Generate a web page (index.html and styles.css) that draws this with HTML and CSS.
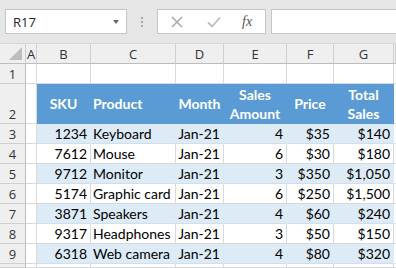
FILE: index.html
```html
<!DOCTYPE html>
<html>
<head>
<meta charset="utf-8">
<link rel="stylesheet" href="styles.css">
</head>
<body>
<div class="app">
  <div class="toolbar">
    <div class="namebox"><span class="nb-text">R17</span><span class="nb-arrow"></span></div>
    <div class="grip"><i></i><i></i><i></i></div>
    <div class="fbtns">
      <svg class="ico" width="12" height="12" viewBox="0 0 12 12"><path d="M1 1L11 11M11 1L1 11" stroke="#ababab" stroke-width="1.6" fill="none"/></svg>
      <svg class="ico" width="14" height="12" viewBox="0 0 14 12"><path d="M1 6.5L5 10.5L13 1.5" stroke="#bdbdbd" stroke-width="1.8" fill="none"/></svg>
      <span class="fx">fx</span>
    </div>
    <div class="finput"></div>
  </div>
  <div class="sheet">
    <div class="hd corner"><svg width="13" height="13" viewBox="0 0 13 13"><polygon points="13,0 13,13 0,13" fill="#bdbdbd"/></svg></div>
    <div class="hd ch">A</div><div class="hd ch">B</div><div class="hd ch">C</div><div class="hd ch">D</div><div class="hd ch">E</div><div class="hd ch">F</div><div class="hd ch">G</div><div class="hd ch"></div>

    <div class="hd rh">1</div>
    <div class="c"></div><div class="c"></div><div class="c"></div><div class="c"></div><div class="c"></div><div class="c"></div><div class="c"></div><div class="c"></div>

    <div class="hd rh">2</div>
    <div class="c"></div>
    <div class="c th cen">SKU</div>
    <div class="c th">Product</div>
    <div class="c th cen">Month</div>
    <div class="c th cen">Sales<br>Amount</div>
    <div class="c th cen">Price</div>
    <div class="c th cen">Total<br>Sales</div>
    <div class="c"></div>

    <div class="hd rh">3</div>
    <div class="c"></div><div class="c band r">1234</div><div class="c band">Keyboard</div><div class="c band r">Jan-21</div><div class="c band r">4</div><div class="c band r">$35</div><div class="c band r">$140</div><div class="c"></div>

    <div class="hd rh">4</div>
    <div class="c"></div><div class="c r">7612</div><div class="c">Mouse</div><div class="c r">Jan-21</div><div class="c r">6</div><div class="c r">$30</div><div class="c r">$180</div><div class="c"></div>

    <div class="hd rh">5</div>
    <div class="c"></div><div class="c band r">9712</div><div class="c band">Monitor</div><div class="c band r">Jan-21</div><div class="c band r">3</div><div class="c band r">$350</div><div class="c band r">$1,050</div><div class="c"></div>

    <div class="hd rh">6</div>
    <div class="c"></div><div class="c r">5174</div><div class="c">Graphic card</div><div class="c r">Jan-21</div><div class="c r">6</div><div class="c r">$250</div><div class="c r">$1,500</div><div class="c"></div>

    <div class="hd rh">7</div>
    <div class="c"></div><div class="c band r">3871</div><div class="c band">Speakers</div><div class="c band r">Jan-21</div><div class="c band r">4</div><div class="c band r">$60</div><div class="c band r">$240</div><div class="c"></div>

    <div class="hd rh">8</div>
    <div class="c"></div><div class="c r">9317</div><div class="c">Headphones</div><div class="c r">Jan-21</div><div class="c r">3</div><div class="c r">$50</div><div class="c r">$150</div><div class="c"></div>

    <div class="hd rh">9</div>
    <div class="c"></div><div class="c band r">6318</div><div class="c band">Web camera</div><div class="c band r">Jan-21</div><div class="c band r">4</div><div class="c band r">$80</div><div class="c band r">$320</div><div class="c"></div>

    <div class="hd rh"></div>
    <div class="c"></div><div class="c"></div><div class="c"></div><div class="c"></div><div class="c"></div><div class="c"></div><div class="c"></div><div class="c"></div>
  </div>
</div>
</body>
</html>
```
FILE: styles.css
```css
* { box-sizing: border-box; }
html, body { margin: 0; padding: 0; }
body { width: 396px; height: 268px; overflow: hidden; background: #fff; }
.app { width: 396px; height: 268px; display: flex; flex-direction: column; }

.toolbar {
  height: 44px;
  flex: none;
  background: #e6e6e6;
  display: flex;
  align-items: flex-start;
  padding: 9px 0 0 5px;
  border-bottom: 1px solid #d6d6d6;
}
.namebox {
  width: 122px;
  height: 25px;
  background: #fff;
  border: 1px solid #c6c6c6;
  display: flex;
  align-items: center;
  justify-content: space-between;
  padding: 0 7px 0 7px;
  font-family: "Open Sans", sans-serif;
  font-size: 13px;
  color: #222;
}
.nb-arrow {
  width: 0; height: 0;
  border-left: 3.5px solid transparent;
  border-right: 3.5px solid transparent;
  border-top: 4px solid #6b6b6b;
}
.grip {
  width: 30px;
  height: 25px;
  display: flex;
  flex-direction: column;
  align-items: center;
  justify-content: center;
  gap: 2px;
}
.grip i { display: block; width: 2px; height: 2px; background: #a8a8a8; }
.fbtns {
  width: 109px;
  height: 25px;
  background: #fff;
  border: 1px solid #c6c6c6;
  display: flex;
  align-items: center;
  padding-left: 13px;
  gap: 0;
}
.fbtns .ico:first-child { margin-right: 24px; }
.fbtns .ico:nth-child(2) { margin-right: 21px; }
.fx {
  font-family: "Liberation Serif", serif;
  font-style: italic;
  font-size: 14px;
  color: #555;
}
.finput {
  flex: 1;
  height: 25px;
  margin-left: 5px;
  background: #fff;
  border: 1px solid #c6c6c6;
  border-right: none;
}

.sheet {
  display: grid;
  grid-template-columns: 26px 11px 54px 85px 48px 63px 47px 60px 2px;
  grid-template-rows: 20px 20px 40px repeat(7, 20px) 4px;
}
.hd {
  background: #efefef;
  border-right: 1px solid #cfcfcf;
  border-bottom: 1px solid #cfcfcf;
  font-family: "Open Sans", sans-serif;
  font-size: 13px;
  color: #333;
  display: flex;
  justify-content: center;
  align-items: center;
  overflow: hidden;
}
.ch { border-bottom-color: #bdbdbd; }
.corner { justify-content: flex-end; align-items: flex-end; padding: 0 3px 3px 0; border-bottom-color: #bdbdbd; }
.rh { align-items: flex-end; padding-bottom: 0; border-right-color: #bdbdbd; }

.c {
  background: #fff;
  border-right: 1px solid #d9d9d9;
  border-bottom: 1px solid #d9d9d9;
  display: flex;
  align-items: center;
  padding: 0 2px 0 2px;
  font-family: Lato, sans-serif;
  font-size: 14px;
  color: #000;
  white-space: nowrap;
  overflow: hidden;
}
.r { justify-content: flex-end; padding-right: 3px; }
.cen { justify-content: center; text-align: center; }
.th {
  background: #5b9bd5;
  border-color: #5b9bd5;
  color: #fff;
  font-weight: bold;
  line-height: 19px;
}
.band {
  background: #ddebf7;
  border-right-color: #ddebf7;
  border-bottom-color: #cfdff0;
}
```
